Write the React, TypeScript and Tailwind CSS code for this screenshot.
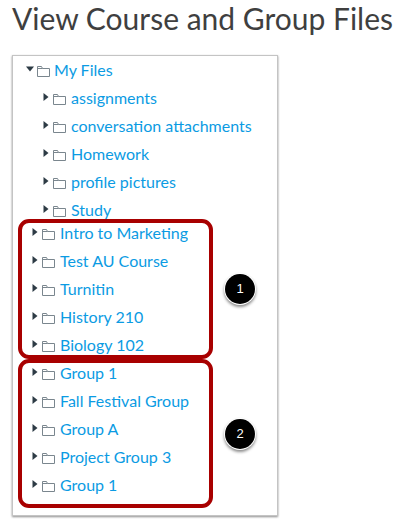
const myFiles = ['assignments', 'conversation attachments', 'Homework', 'profile pictures', 'Study']
const courses = ['Intro to Marketing', 'Test AU Course', 'Turnitin', 'History 210', 'Biology 102']
const groups = ['Group 1', 'Fall Festival Group', 'Group A', 'Project Group 3', 'Group 1']

function Arrow({ open }: { open?: boolean }) {
  return (
    <svg width="8" height="8" viewBox="0 0 8 8" className="shrink-0">
      <path d={open ? 'M0 1.5h8L4 6.5z' : 'M1.5 0l5 4-5 4z'} fill="#2d3b45" />
    </svg>
  )
}

function Folder() {
  return (
    <svg width="13" height="11" viewBox="0 0 13 11" className="shrink-0" fill="none">
      <path d="M.5 10.5v-10h4l1 2h7v8z" stroke="#7a868e" strokeWidth="1" />
      <path d="M.5 2.5h5" stroke="#7a868e" strokeWidth="1" />
    </svg>
  )
}

function Row({ label, open }: { label: string; open?: boolean }) {
  return (
    <div className="flex h-5 items-center">
      <div className="flex w-[10px] -translate-y-[1px]">
        <Arrow open={open} />
      </div>
      <div className="ml-[1px] translate-y-[1px]">
        <Folder />
      </div>
      <span className={`text-base leading-5 text-[#0b9be3] ${open ? 'ml-1' : 'ml-[5px]'}`}>{label}</span>
    </div>
  )
}

function Badge({ n }: { n: number }) {
  return (
    <div className="ml-3 flex h-[30px] w-[30px] items-center justify-center rounded-full bg-black font-['Liberation_Sans',sans-serif] text-[13px] text-white shadow-[0_2px_3px_1px_rgba(0,0,0,0.45)] ring-1 ring-white">
      {n}
    </div>
  )
}

function Callout({ items, n, className }: { items: string[]; n: number; className: string }) {
  return (
    <div className="flex items-center">
      <div className={`flex w-[195px] flex-col gap-2 rounded-[11px] border-4 border-[#a80000] pl-[9px] ${className}`}>
        {items.map((item, i) => (
          <Row key={i} label={item} />
        ))}
      </div>
      <Badge n={n} />
    </div>
  )
}

export default function App() {
  return (
    <div className="h-[531px] w-[404px] overflow-hidden bg-white font-['Lato',sans-serif]">
      <h1 className="pl-3 text-[30px] font-normal leading-[36px] text-[#3f3f3f]">
        View Course and Group Files
      </h1>
      <div className="ml-3 mt-[19px] h-[461px] w-[266px] border border-[#c4c4c4] pt-1 shadow-[0_1px_2px_rgba(0,0,0,0.45)]">
        <div className="pl-[13px]">
          <Row label="My Files" open />
          <div className="mt-2 flex flex-col gap-2 pl-4">
            {myFiles.map((item) => (
              <Row key={item} label={item} />
            ))}
          </div>
        </div>
        <div className="-mt-[1px] pl-[5px]">
          <Callout items={courses} n={1} className="" />
          <Callout items={groups} n={2} className="pb-[9px]" />
        </div>
      </div>
    </div>
  )
}
